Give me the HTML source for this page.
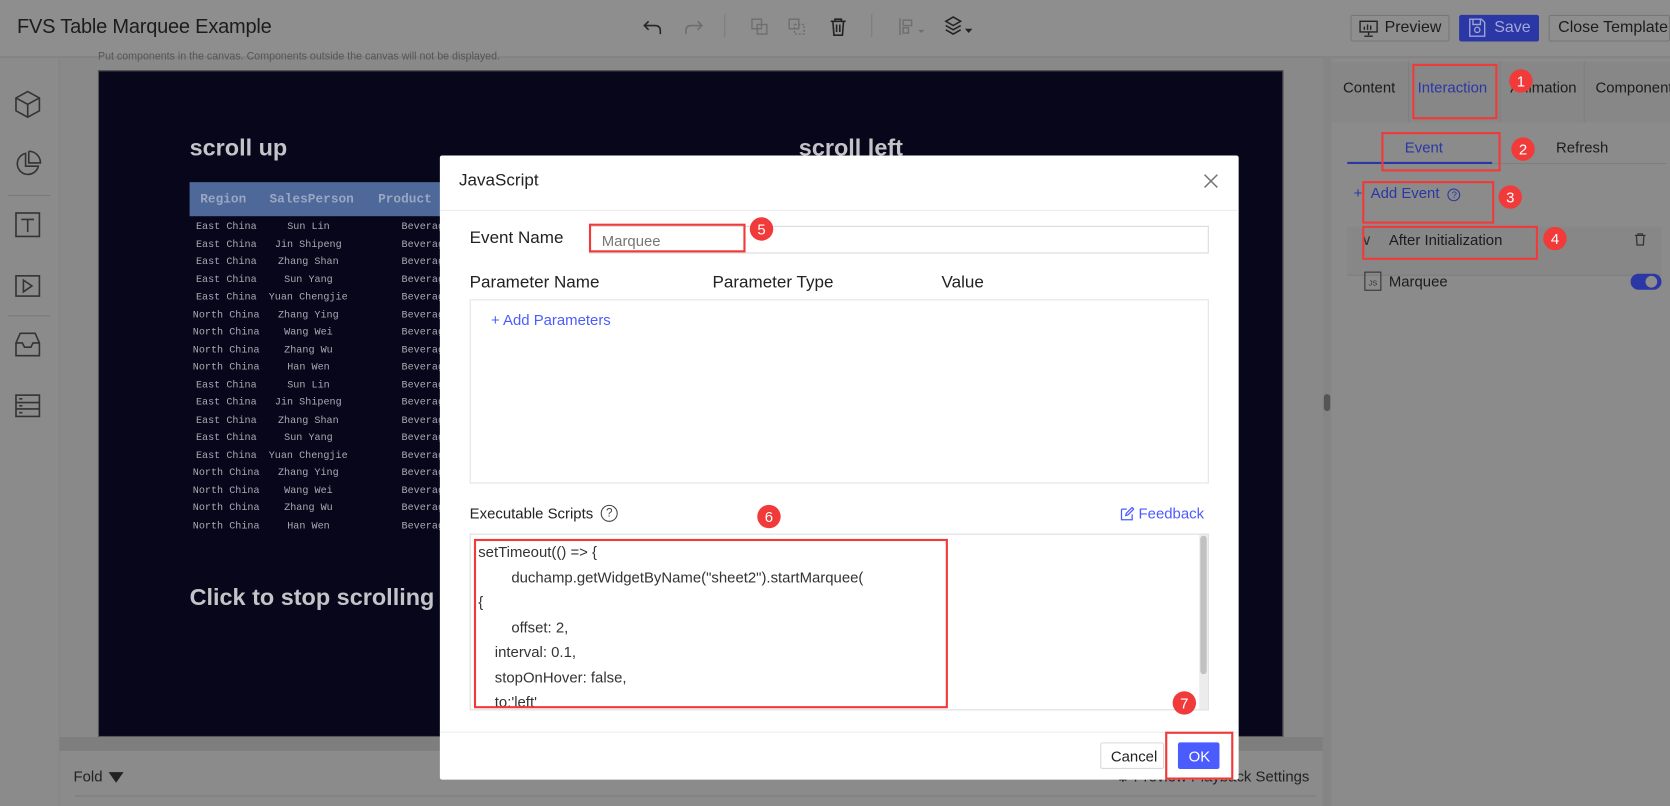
<!DOCTYPE html>
<html><head><meta charset="utf-8"><style>
*{box-sizing:border-box;margin:0;padding:0}
html,body{width:1670px;height:806px;overflow:hidden;background:#8a8a8a;font-family:"Liberation Sans",sans-serif}
#w{position:absolute;left:0;top:0;width:1568px;height:757px;transform:scale(1.06505);transform-origin:0 0;background:#898989}
.a{position:absolute}
.t{position:absolute;white-space:nowrap}
.rb{position:absolute;border:2px solid #f03a3a}
.bd{position:absolute;width:22px;height:22px;border-radius:50%;background:#f13b3b;color:#fff;font-size:14px;text-align:center;line-height:22px}
.mono{font-family:"Liberation Mono","DejaVu Sans Mono",monospace}
.row{position:absolute;font-size:9.5px;color:#a9a9b0;white-space:nowrap}
svg{position:absolute}
</style></head><body><div id="w">
<div class="a" style="left:0;top:0;width:1568px;height:54px;background:#8e8e8e;border-bottom:1px solid #7e7e7e"></div>
<div class="t" style="left:16px;top:14px;font-size:18.8px;color:#1c1c1c;letter-spacing:-0.2px">FVS Table Marquee Example</div>
<svg style="left:603px;top:16px" width="20" height="20" viewBox="0 0 20 20"><path d="M6 4 L2 8 L6 12 M2 8 H12 Q17 8 17 13 V16" fill="none" stroke="#262626" stroke-width="1.5"/></svg>
<svg style="left:641px;top:16px" width="20" height="20" viewBox="0 0 20 20"><path d="M14 4 L18 8 L14 12 M18 8 H8 Q3 8 3 13 V16" fill="none" stroke="#6e6e6e" stroke-width="1.5"/></svg>
<div class="a" style="left:680px;top:13px;width:1px;height:22px;background:#7c7c7c"></div>
<svg style="left:705px;top:17px" width="16" height="16"><rect x="1" y="1" width="9" height="9" fill="none" stroke="#6e6e6e" stroke-width="1.3"/><rect x="6" y="6" width="9" height="9" fill="none" stroke="#6e6e6e" stroke-width="1.3"/></svg>
<svg style="left:740px;top:17px" width="16" height="16"><rect x="1" y="1" width="9" height="9" fill="none" stroke="#6e6e6e" stroke-width="1.3"/><rect x="6" y="6" width="9" height="9" fill="none" stroke="#6e6e6e" stroke-width="1.3" stroke-dasharray="2 1.5"/></svg>
<svg style="left:779px;top:16px" width="16" height="18"><path d="M1 4 H15 M5 4 V2 H11 V4 M3 4 L4 17 H12 L13 4 M6.5 7 V14 M9.5 7 V14" fill="none" stroke="#222" stroke-width="1.5"/></svg>
<div class="a" style="left:818px;top:13px;width:1px;height:22px;background:#7c7c7c"></div>
<svg style="left:843px;top:15px" width="28" height="20"><path d="M2 2 V18 M5 4 H13 V9 H5 Z M5 11 H10 V16 H5 Z" fill="none" stroke="#6e6e6e" stroke-width="1.3"/><path d="M19 13 L25 13 L22 16Z" fill="#6e6e6e"/></svg>
<svg style="left:886px;top:14px" width="30" height="22"><path d="M2 6 L9 2 L16 6 L9 10 Z M2 10 L9 14 L16 10 M2 14 L9 18 L16 14" fill="none" stroke="#222" stroke-width="1.4"/><path d="M20 13 L27 13 L23.5 17Z" fill="#222"/></svg>
<div class="a" style="left:1268px;top:14px;width:93px;height:25px;border:1px solid #777;border-radius:2px;background:#8e8e8e"></div>
<svg style="left:1276px;top:19px" width="18" height="16"><rect x="1" y="1" width="16" height="10" fill="none" stroke="#222" stroke-width="1.3"/><path d="M5 9 V6 M8 9 V4 M11 9 V5 M9 11 V14 M5 15 H13" stroke="#222" stroke-width="1.3"/></svg>
<div class="t" style="left:1300px;top:17px;font-size:15px;color:#1c1c1c">Preview</div>
<div class="a" style="left:1370px;top:14px;width:75px;height:25px;background:#2a37a5;border-radius:2px"></div>
<svg style="left:1379px;top:17px" width="16" height="18"><path d="M1 1 H12 L15 4 V17 H1 Z M4 1 V6 H11 V1" fill="none" stroke="#9da3d4" stroke-width="1.3"/><circle cx="8" cy="11" r="2.5" fill="none" stroke="#9da3d4" stroke-width="1.3"/></svg>
<div class="t" style="left:1403px;top:17px;font-size:15px;color:#a2a8d8">Save</div>
<div class="a" style="left:1454px;top:14px;width:114px;height:25px;border:1px solid #777;border-radius:2px"></div>
<div class="t" style="left:1463px;top:17px;font-size:15px;color:#1c1c1c">Close Template</div>
<div class="a" style="left:0;top:55px;width:56px;height:702px;background:#8b8b8b;border-right:1px solid #838383"></div>
<svg style="left:12px;top:84px" width="28" height="28"><path d="M14 2 L25 8 V20 L14 26 L3 20 V8 Z M3 8 L14 14 L25 8 M14 14 V26" fill="none" stroke="#333" stroke-width="1.5"/></svg>
<svg style="left:12px;top:140px" width="28" height="28"><path d="M12 4 A10 10 0 1 0 24 16 H12 Z M15 2 V13 H26 A11 11 0 0 0 15 2" fill="none" stroke="#333" stroke-width="1.5"/></svg>
<div class="a" style="left:7px;top:183px;width:40px;height:1px;background:#7a7a7a"></div>
<svg style="left:12px;top:197px" width="28" height="28"><rect x="3" y="3" width="22" height="22" fill="none" stroke="#333" stroke-width="1.5"/><path d="M8 9 H20 M14 9 V21" stroke="#333" stroke-width="1.5"/></svg>
<svg style="left:12px;top:254px" width="28" height="28"><rect x="3" y="5" width="22" height="19" fill="none" stroke="#333" stroke-width="1.5"/><path d="M10 9 L18 14.5 L10 20 Z" fill="none" stroke="#333" stroke-width="1.5"/></svg>
<div class="a" style="left:7px;top:296px;width:40px;height:1px;background:#7a7a7a"></div>
<svg style="left:12px;top:310px" width="28" height="28"><path d="M3 12 L7 3 H21 L25 12 V24 H3 Z M3 12 H9 L11 16 H17 L19 12 H25" fill="none" stroke="#333" stroke-width="1.5"/></svg>
<svg style="left:12px;top:367px" width="28" height="28"><rect x="3" y="4" width="22" height="20" fill="none" stroke="#333" stroke-width="1.5"/><path d="M3 11 H25 M3 17 H25 M6 7.5 H9 M6 14 H9 M6 20.5 H9" stroke="#333" stroke-width="1.5"/></svg>
<div class="t" style="left:92px;top:48px;font-size:10px;color:#555">Put components in the canvas. Components outside the canvas will not be displayed.</div>
<div class="a" style="left:92px;top:66px;width:1113px;height:626px;background:#08061a;border:1px solid #555"></div>
<div class="t" style="left:178px;top:126px;font-size:22px;font-weight:bold;color:#c3c3c8">scroll up</div>
<div class="t" style="left:750px;top:126px;font-size:22px;font-weight:bold;color:#c3c3c8">scroll left</div>
<div class="a" style="left:178px;top:171px;width:240px;height:32px;background:#4e6899"></div>
<div class="t mono" style="left:188px;top:180px;font-size:12px;font-weight:bold;color:#9aa7c2">Region</div>
<div class="t mono" style="left:253px;top:180px;font-size:12px;font-weight:bold;color:#9aa7c2">SalesPerson</div>
<div class="t mono" style="left:355px;top:180px;font-size:12px;font-weight:bold;color:#9aa7c2">Product T</div>
<div id="rows"></div>
<div class="t" style="left:178px;top:548px;font-size:22px;font-weight:bold;color:#c3c3c8">Click to stop scrolling</div>
<div class="a" style="left:56px;top:692px;width:1186px;height:13px;background:#7e7e7e"></div>
<div class="a" style="left:56px;top:705px;width:1186px;height:52px;background:#8b8b8b"></div>
<div class="t" style="left:69px;top:721px;font-size:14px;color:#222">Fold</div>
<svg style="left:102px;top:724px" width="14" height="12"><path d="M0 1 H14 L7 11Z" fill="#222"/></svg>
<div class="t" style="left:1048px;top:721px;font-size:14px;color:#222">⚙ Preview Playback Settings</div>
<div class="a" style="left:70px;top:747px;width:1165px;height:1px;background:#7c7c7c"></div>
<div class="a" style="left:1242px;top:55px;width:8px;height:702px;background:#858585"></div>
<div class="a" style="left:1243px;top:370px;width:6px;height:16px;background:#555;border-radius:3px"></div>
<div class="a" style="left:1250px;top:55px;width:318px;height:702px;background:#8b8b8b"></div>
<div class="a" style="left:1250px;top:58px;width:318px;height:57px;background:#878787"></div>
<div class="a" style="left:1322px;top:58px;width:1px;height:57px;background:#7f7f7f"></div>
<div class="a" style="left:1408px;top:58px;width:1px;height:57px;background:#7f7f7f"></div>
<div class="a" style="left:1487px;top:58px;width:1px;height:57px;background:#7f7f7f"></div>
<div class="t" style="left:1261px;top:74px;font-size:14px;color:#1c1c1c">Content</div>
<div class="t" style="left:1331px;top:74px;font-size:14px;color:#2a37a5">Interaction</div>
<div class="t" style="left:1418px;top:74px;font-size:14px;color:#1c1c1c">Animation</div>
<div class="t" style="left:1498px;top:74px;font-size:14px;color:#1c1c1c">Component</div>
<div class="t" style="left:1319px;top:130px;font-size:14px;color:#2a37a5">Event</div>
<div class="t" style="left:1461px;top:130px;font-size:14px;color:#1c1c1c">Refresh</div>
<div class="a" style="left:1265px;top:153px;width:300px;height:1px;background:#7f7f7f"></div>
<div class="a" style="left:1265px;top:152px;width:136px;height:2px;background:#2a37a5"></div>
<div class="t" style="left:1271px;top:173px;font-size:14px;color:#2a37a5">+&nbsp;&nbsp;Add Event <span style="display:inline-block;width:12px;height:12px;border:1px solid #2a37a5;border-radius:50%;font-size:9px;text-align:center;line-height:11px;margin-left:4px">?</span></div>
<div class="a" style="left:1265px;top:213px;width:295px;height:46px;background:#878787;border-bottom:1px solid #7e7e7e"></div>
<div class="t" style="left:1278px;top:217px;font-size:14px;color:#333">∨</div>
<div class="t" style="left:1304px;top:217px;font-size:14px;color:#1c1c1c">After Initialization</div>
<svg style="left:1535px;top:219px" width="10" height="12"><path d="M0 2 H10 M3 2 V0.5 H7 V2 M1.5 2 L2 11 H8 L8.5 2" fill="none" stroke="#333" stroke-width="1.2"/></svg>
<div class="a" style="left:1281px;top:255px;width:16px;height:18px;border:1px solid #333;font-size:7px;color:#333;text-align:center;line-height:22px">JS</div>
<div class="t" style="left:1304px;top:256px;font-size:14px;color:#1c1c1c">Marquee</div>
<div class="a" style="left:1531px;top:257px;width:29px;height:15px;border-radius:8px;background:#2a37a5"></div>
<div class="a" style="left:1545px;top:259px;width:11px;height:11px;border-radius:50%;background:#8e8e8e"></div>
<div class="a" style="left:413px;top:146px;width:750px;height:586px;background:#fff;border-radius:2px"></div>
<div class="t" style="left:431px;top:161px;font-size:16px;color:#222">JavaScript</div>
<svg style="left:1130px;top:163px" width="14" height="14"><path d="M1 1 L13 13 M13 1 L1 13" stroke="#777" stroke-width="1.4"/></svg>
<div class="a" style="left:413px;top:197px;width:750px;height:1px;background:#ececec"></div>
<div class="t" style="left:441px;top:215px;font-size:16px;color:#222">Event Name</div>
<div class="a" style="left:553px;top:212px;width:582px;height:26px;border:1px solid #d9d9d9"></div>
<div class="t" style="left:565px;top:218px;font-size:14px;color:#777">Marquee</div>
<div class="t" style="left:441px;top:257px;font-size:16px;color:#222">Parameter Name</div>
<div class="t" style="left:669px;top:257px;font-size:16px;color:#222">Parameter Type</div>
<div class="t" style="left:884px;top:257px;font-size:16px;color:#222">Value</div>
<div class="a" style="left:441px;top:281px;width:694px;height:173px;border:1px solid #e3e3e3"></div>
<div class="t" style="left:461px;top:292px;font-size:14px;color:#4b5cff">+ Add Parameters</div>
<div class="t" style="left:441px;top:474px;font-size:14px;color:#222">Executable Scripts</div>
<div class="a" style="left:564px;top:474px;width:16px;height:16px;border:1.3px solid #444;border-radius:50%;font-size:11px;text-align:center;line-height:14px;color:#444">?</div>
<svg style="left:1051px;top:475px" width="14" height="14"><path d="M2 3 H7 M2 3 V13 H12 V8 M6 9 L6.5 7 L12 1.5 L13.5 3 L8 8.5 Z" fill="none" stroke="#4b5cff" stroke-width="1.2"/></svg>
<div class="t" style="left:1069px;top:474px;font-size:14px;color:#4b5cff">Feedback</div>
<div class="a" style="left:441px;top:501px;width:694px;height:166px;border:1px solid #dcdcdc;overflow:hidden">
<div style="position:absolute;left:7px;top:5px;font-size:14px;color:#333;line-height:23.5px;white-space:pre">setTimeout(() =&gt; {
        duchamp.getWidgetByName("sheet2").startMarquee(
{
        offset: 2,
    interval: 0.1,
    stopOnHover: false,
    to:'left'</div></div>
<div class="a" style="left:1126px;top:502px;width:8px;height:164px;background:#ececec"></div>
<div class="a" style="left:1127px;top:503px;width:6px;height:130px;background:#c1c1c1;border-radius:3px"></div>
<div class="a" style="left:413px;top:687px;width:750px;height:1px;background:#ececec"></div>
<div class="a" style="left:1033px;top:697px;width:60px;height:25px;border:1px solid #d9d9d9;border-radius:2px"></div>
<div class="t" style="left:1043px;top:702px;font-size:14px;color:#222">Cancel</div>
<div class="a" style="left:1106px;top:697px;width:39px;height:25px;background:#4b5cff;border-radius:2px"></div>
<div class="t" style="left:1116px;top:702px;font-size:14px;color:#fff">OK</div>
<div class="rb" style="left:1326px;top:60px;width:80px;height:52px"></div><div class="bd" style="left:1417px;top:65px">1</div>
<div class="rb" style="left:1297px;top:124px;width:112px;height:37px"></div><div class="bd" style="left:1419px;top:129px">2</div>
<div class="rb" style="left:1279px;top:170px;width:124px;height:40px"></div><div class="bd" style="left:1407px;top:174px">3</div>
<div class="rb" style="left:1279px;top:212px;width:165px;height:32px"></div><div class="bd" style="left:1449px;top:213px">4</div>
<div class="rb" style="left:553px;top:210px;width:147px;height:27px"></div><div class="bd" style="left:704px;top:204px">5</div>
<div class="rb" style="left:445px;top:506px;width:445px;height:159px"></div><div class="bd" style="left:711px;top:474px">6</div>
<div class="rb" style="left:1094px;top:687px;width:64px;height:45px"></div><div class="bd" style="left:1101px;top:649px">7</div>
</div>
<script>
var d=[["East China","Sun Lin"],["East China","Jin Shipeng"],["East China","Zhang Shan"],["East China","Sun Yang"],["East China","Yuan Chengjie"],["North China","Zhang Ying"],["North China","Wang Wei"],["North China","Zhang Wu"],["North China","Han Wen"]];
var h="";for(var i=0;i<18;i++){var r=d[i%9],y=207+i*16.5;
h+='<div class="row mono" style="left:'+(r[0][0]=="N"?181:184)+'px;top:'+y+'px">'+r[0]+'</div><div class="row mono" style="left:'+(290-r[1].length*2.9)+'px;top:'+y+'px">'+r[1]+'</div><div class="row mono" style="left:377px;top:'+y+'px">Beverag</div>';}
document.getElementById("rows").innerHTML=h;
</script>
</body></html>
